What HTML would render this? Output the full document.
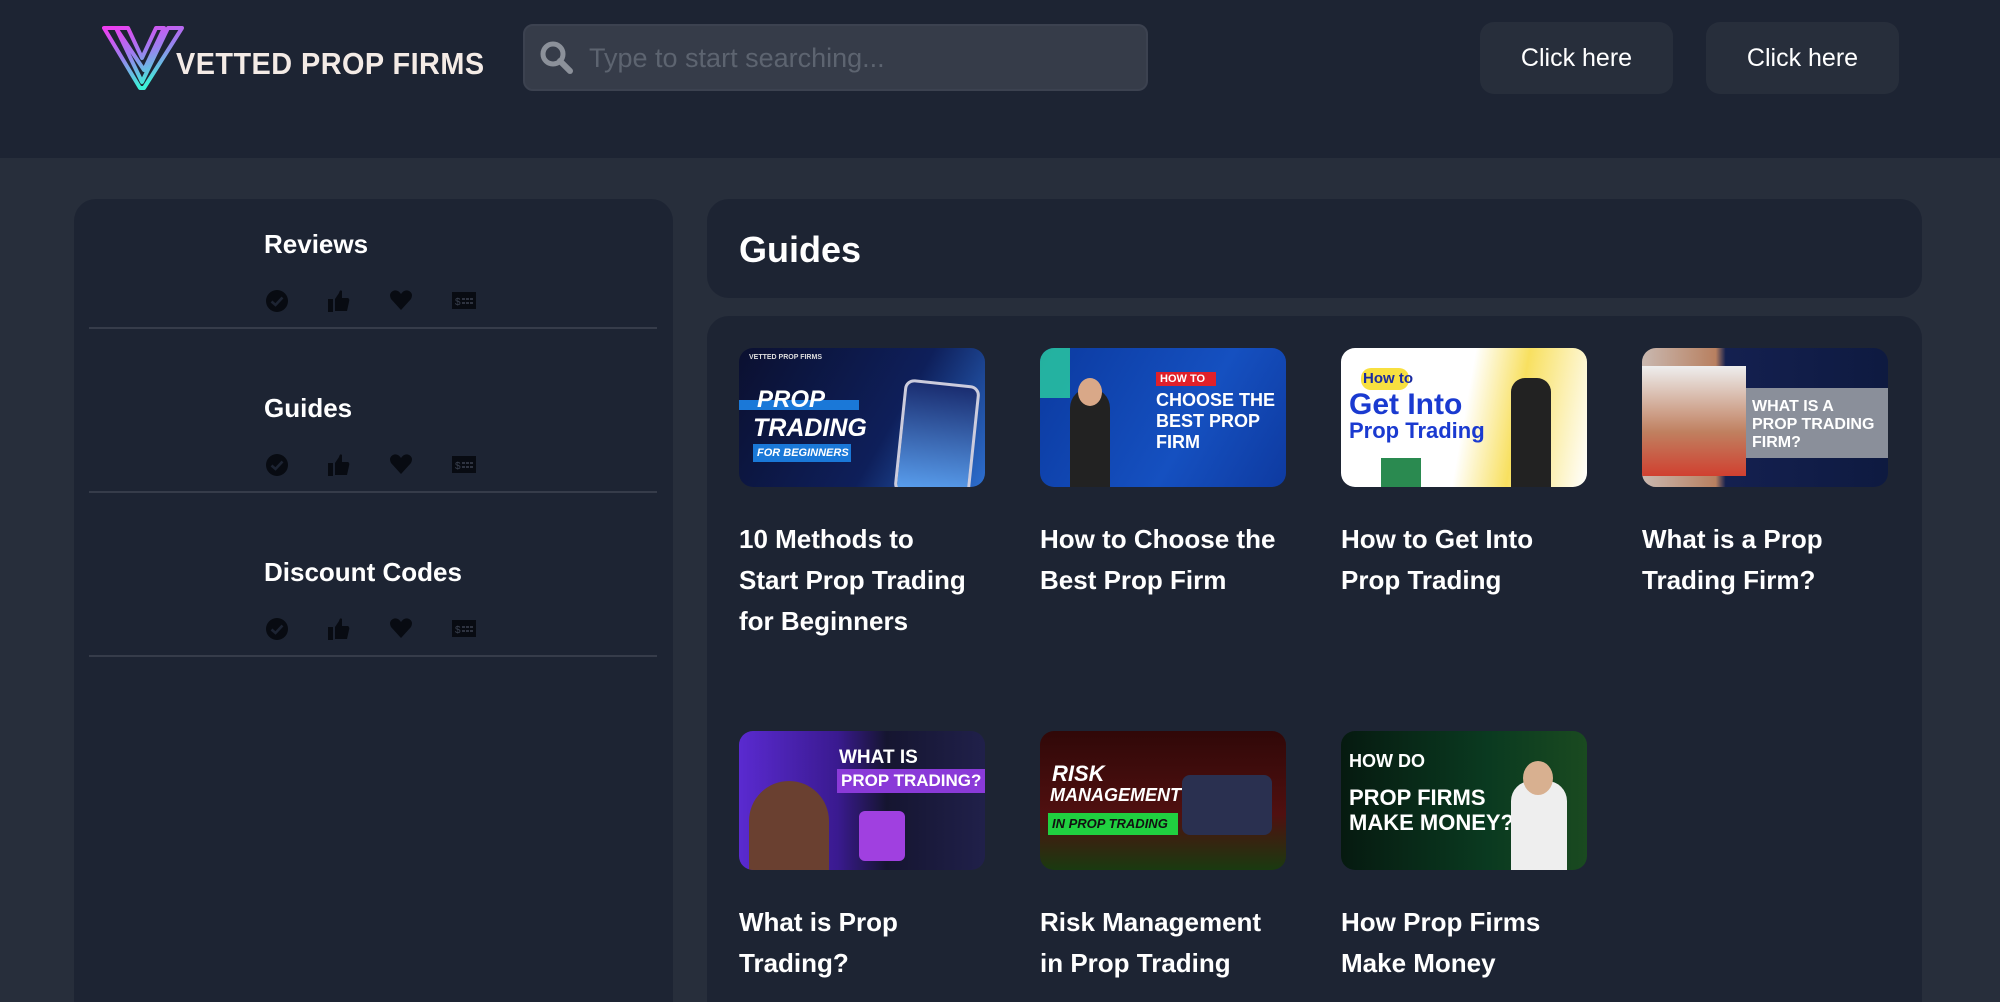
<!DOCTYPE html>
<html><head><meta charset="utf-8">
<style>
*{margin:0;padding:0;box-sizing:border-box}
html,body{width:2000px;height:1002px;overflow:hidden;background:#272e3b;font-family:"Liberation Sans",sans-serif;color:#fff}
#root{position:relative;width:2000px;height:1002px;overflow:hidden}
.hdr{position:absolute;left:0;top:0;width:2000px;height:158px;background:#1d2433}
.logo{position:absolute;left:102px;top:26px}
.logotext{position:absolute;left:176px;top:46px;font-size:31px;font-weight:bold;letter-spacing:0.5px;color:#f4ebe6;white-space:nowrap;transform:scaleX(0.93);transform-origin:left}
.search{position:absolute;left:523px;top:24px;width:625px;height:67px;background:#363c49;border:2px solid #3c4250;border-radius:10px}
.search span{position:absolute;left:64px;top:17px;font-size:27px;color:#5d6470}
.btn{position:absolute;top:22px;height:72px;width:193px;background:#272e3b;border-radius:14px;font-size:25px;text-align:center;line-height:72px}
.side{position:absolute;left:74px;top:199px;width:599px;height:803px;background:#1d2433;border-radius:22px 22px 0 0}
.sec{position:absolute;left:15px;width:568px;border-bottom:2px solid #363c4a}
.sec h3{position:absolute;left:175px;font-size:26px;font-weight:bold}
.gh{position:absolute;left:707px;top:199px;width:1215px;height:99px;background:#1d2433;border-radius:22px}
.gh h1{position:absolute;left:32px;top:30px;font-size:36px;font-weight:bold}
.grid{position:absolute;left:707px;top:316px;width:1215px;height:686px;background:#1d2433;border-radius:22px 22px 0 0;overflow:hidden}
.card{position:absolute;width:246px}
.th{position:absolute;left:0;top:0;width:246px;height:139px;border-radius:14px;overflow:hidden}
.tt{position:absolute;left:0;top:171px;width:260px;font-size:26px;font-weight:bold;line-height:41px;color:#fff}
.th b{position:absolute;font-family:"Liberation Sans",sans-serif;font-weight:bold;white-space:nowrap}
</style></head><body><div id="root">
<div class="hdr">
 <svg class="logo" width="82" height="64" viewBox="0 0 82 64">
  <defs><linearGradient id="lg" x1="0" y1="0" x2="0.4" y2="1"><stop offset="0" stop-color="#f03cf0"/><stop offset="0.5" stop-color="#9d7ef0"/><stop offset="1" stop-color="#3df0d8"/></linearGradient></defs>
  <path d="M2 2 L14 2 L40 56 L66 2 L80 2 L42 62 L38 62 Z M14 2 L26 2 L40 32 L54 2 L62 2 L42 44 Z" fill="none" stroke="url(#lg)" stroke-width="4" stroke-linejoin="round"/>
 </svg>
 <div class="logotext">VETTED PROP FIRMS</div>
 <div class="search">
  <svg style="position:absolute;left:14px;top:14px" width="36" height="36" viewBox="0 0 36 36"><circle cx="14" cy="14" r="10" fill="none" stroke="#8c919a" stroke-width="5"/><path d="M21 21 L31 31" stroke="#8c919a" stroke-width="6" stroke-linecap="round"/></svg>
  <span>Type to start searching...</span>
 </div>
 <div class="btn" style="left:1480px">Click here</div>
 <div class="btn" style="left:1706px">Click here</div>
</div>

<div class="side"></div>

<div class="gh"><h1>Guides</h1></div>
<div class="grid">
 <div class="card" style="left:32px;top:32px">
  <div class="th" style="background:linear-gradient(120deg,#0b1030 0%,#0e1f5a 60%,#2d6fd0 100%)">
   <b style="left:10px;top:6px;font-size:7px;color:#ddd">VETTED PROP FIRMS</b>
   <div style="position:absolute;left:0;top:52px;width:120px;height:10px;background:#1a78d8"></div>
   <b style="left:18px;top:38px;font-size:24px;font-style:italic">PROP</b>
   <b style="left:14px;top:66px;font-size:25px;font-style:italic">TRADING</b>
   <div style="position:absolute;left:14px;top:96px;width:98px;height:18px;background:#1a78d8"></div>
   <b style="left:18px;top:99px;font-size:11px;font-style:italic">FOR BEGINNERS</b>
   <div style="position:absolute;left:160px;top:34px;width:76px;height:115px;border:3px solid #ccd;border-radius:10px;background:linear-gradient(#1a2d70,#5aa0f0);transform:rotate(6deg)"></div>
  </div>
  <div class="tt">10 Methods to<br>Start Prop Trading<br>for Beginners</div>
 </div>
 <div class="card" style="left:333px;top:32px">
  <div class="th" style="background:linear-gradient(120deg,#0b3aa0,#1550c0 60%,#0e3aa0)">
   <div style="position:absolute;left:0;top:0;width:30px;height:50px;background:#2ad0a0;opacity:.8"></div>
   <div style="position:absolute;left:30px;top:40px;width:40px;height:99px;background:#222;border-radius:20px 20px 0 0"></div>
   <div style="position:absolute;left:38px;top:30px;width:24px;height:28px;background:#d9a888;border-radius:50%"></div>
   <div style="position:absolute;left:116px;top:24px;width:60px;height:14px;background:#e0202a"></div>
   <b style="left:120px;top:25px;font-size:11px">HOW TO</b>
   <b style="left:116px;top:42px;font-size:18px;line-height:21px">CHOOSE THE<br>BEST PROP<br>FIRM</b>
  </div>
  <div class="tt">How to Choose the<br>Best Prop Firm</div>
 </div>
 <div class="card" style="left:634px;top:32px">
  <div class="th" style="background:linear-gradient(100deg,#fff 0%,#fff 50%,#f8e060 70%,#fff 100%)">
   <div style="position:absolute;left:20px;top:20px;width:48px;height:22px;background:#f8e040;border-radius:10px"></div>
   <b style="left:22px;top:22px;font-size:15px;color:#1a2aa0">How to</b>
   <b style="left:8px;top:40px;font-size:30px;color:#1a3ad0">Get Into</b>
   <b style="left:8px;top:70px;font-size:22px;color:#1a3ad0">Prop Trading</b>
   <div style="position:absolute;left:170px;top:30px;width:40px;height:109px;background:#222;border-radius:14px 14px 0 0"></div>
   <div style="position:absolute;left:40px;top:110px;width:40px;height:29px;background:#2a8a50"></div>
  </div>
  <div class="tt">How to Get Into<br>Prop Trading</div>
 </div>
 <div class="card" style="left:935px;top:32px">
  <div class="th" style="background:linear-gradient(90deg,#c9b8b0 0%,#b88060 30%,#142050 34%,#0e1a40 100%)">
   <div style="position:absolute;left:0;top:18px;width:104px;height:110px;background:linear-gradient(#eee,#c08060 60%,#d04030)"></div>
   <div style="position:absolute;left:104px;top:40px;width:142px;height:70px;background:#8a8f9a"></div>
   <b style="left:110px;top:50px;font-size:16px;line-height:18px">WHAT IS A<br>PROP TRADING<br>FIRM?</b>
  </div>
  <div class="tt">What is a Prop<br>Trading Firm?</div>
 </div>
 <div class="card" style="left:32px;top:415px">
  <div class="th" style="background:linear-gradient(90deg,#5a2ad0 0%,#3a1a90 40%,#151530 60%,#20204a 100%)">
   <div style="position:absolute;left:10px;top:50px;width:80px;height:100px;background:#6a4030;border-radius:40px 40px 0 0"></div>
   <b style="left:100px;top:16px;font-size:19px">WHAT IS</b>
   <div style="position:absolute;left:98px;top:38px;width:148px;height:24px;background:#8a3ad8"></div>
   <b style="left:102px;top:40px;font-size:17px">PROP TRADING?</b>
   <div style="position:absolute;left:120px;top:80px;width:46px;height:50px;background:#a040e0;border-radius:6px"></div>
  </div>
  <div class="tt">What is Prop<br>Trading?</div>
 </div>
 <div class="card" style="left:333px;top:415px">
  <div class="th" style="background:linear-gradient(180deg,#300808,#501010 60%,#1a3a10)">
   <b style="left:12px;top:30px;font-size:22px;font-style:italic">RISK</b>
   <b style="left:10px;top:54px;font-size:18px;font-style:italic">MANAGEMENT</b>
   <div style="position:absolute;left:8px;top:82px;width:130px;height:22px;background:#20d040"></div>
   <b style="left:12px;top:85px;font-size:13px;font-style:italic;color:#111">IN PROP TRADING</b>
   <div style="position:absolute;left:142px;top:44px;width:90px;height:60px;background:#2a3050;border-radius:8px"></div>
  </div>
  <div class="tt">Risk Management<br>in Prop Trading</div>
 </div>
 <div class="card" style="left:634px;top:415px">
  <div class="th" style="background:linear-gradient(90deg,#061a10,#0a3a20 60%,#1a4a20)">
   <b style="left:8px;top:20px;font-size:18px">HOW DO</b>
   <b style="left:8px;top:54px;font-size:22px;line-height:25px">PROP FIRMS<br>MAKE MONEY?</b>
   <div style="position:absolute;left:170px;top:50px;width:56px;height:89px;background:#eee;border-radius:20px 20px 0 0"></div>
   <div style="position:absolute;left:182px;top:30px;width:30px;height:34px;background:#d8b090;border-radius:50%"></div>
  </div>
  <div class="tt">How Prop Firms<br>Make Money</div>
 </div>
</div>
</div>
<script>
const names=[["Reviews",0],["Guides",164],["Discount Codes",328]];
const icons=`
<svg width="24" height="24" viewBox="0 0 24 24" style="position:absolute;left:0"><circle cx="12" cy="12" r="11" fill="#080b12"/><path d="M6.5 12.5 L10.5 16 L17.5 8.5" fill="none" stroke="#1d2433" stroke-width="2.6"/></svg>
<svg width="24" height="24" viewBox="0 0 24 24" style="position:absolute;left:62px"><rect x="1" y="10" width="5" height="13" fill="#080b12"/><path d="M8 10 L12 4 Q13 0 15 2 L15 9 L21 9 Q23 10 22 13 L20 22 L8 22 Z" fill="#080b12"/></svg>
<svg width="24" height="22" viewBox="0 0 24 22" style="position:absolute;left:124px"><path d="M12 21 L2 10 Q-1 4 5 1.5 Q9 0.5 12 5 Q15 0.5 19 1.5 Q25 4 22 10 Z" fill="#080b12"/></svg>
<svg width="24" height="18" viewBox="0 0 24 18" style="position:absolute;left:187px;top:3px"><rect width="24" height="17" fill="#080b12"/><text x="3" y="13" font-size="10" fill="#3a4150" font-family="Liberation Sans">$</text><path d="M10 7h11M10 11h11" stroke="#3a4150" stroke-width="1.5" stroke-dasharray="3 1"/></svg>`;
const side=document.querySelector('.side');
names.forEach(([n,t])=>{side.insertAdjacentHTML('beforeend',`<div class="sec" style="top:${t}px;height:130px"><h3 style="top:30px">${n}</h3><div style="position:absolute;left:176px;top:90px">${icons}</div></div>`)});
</script>
</body></html>
